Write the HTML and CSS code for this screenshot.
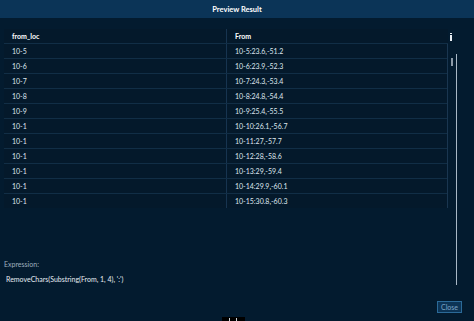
FILE: index.html
```html
<!DOCTYPE html>
<html>
<head>
<meta charset="utf-8">
<link rel="stylesheet" href="styles.css">
</head>
<body>
<div class="dialog">
  <div class="titlebar">Preview Result</div>
  <div class="content">
    <div class="grid">
      <div class="row head">
        <div class="cell">from_loc</div>
        <div class="cell">From</div>
      </div>
      <div class="body">
        <div class="row"><div class="cell">10-5</div><div class="cell">10-5:23.6,-51.2</div></div>
        <div class="row"><div class="cell">10-6</div><div class="cell">10-6:23.9,-52.3</div></div>
        <div class="row"><div class="cell">10-7</div><div class="cell">10-7:24.3,-53.4</div></div>
        <div class="row"><div class="cell">10-8</div><div class="cell">10-8:24.8,-54.4</div></div>
        <div class="row"><div class="cell">10-9</div><div class="cell">10-9:25.4,-55.5</div></div>
        <div class="row"><div class="cell">10-1</div><div class="cell">10-10:26.1,-56.7</div></div>
        <div class="row"><div class="cell">10-1</div><div class="cell">10-11:27,-57.7</div></div>
        <div class="row"><div class="cell">10-1</div><div class="cell">10-12:28,-58.6</div></div>
        <div class="row"><div class="cell">10-1</div><div class="cell">10-13:29,-59.4</div></div>
        <div class="row"><div class="cell">10-1</div><div class="cell">10-14:29.9,-60.1</div></div>
        <div class="row last"><div class="cell">10-1</div><div class="cell">10-15:30.8,-60.3</div></div>
      </div>
    </div>
    <div class="colmenu"></div>
    <div class="thumb"></div>
    <div class="track"></div>
    <div class="expr">
      <div class="expr-label">Expression:</div>
      <div class="expr-text">RemoveChars(Substring(From, 1, 4), ':')</div>
    </div>
    <div class="footer">
      <button class="close">Close</button>
    </div>
  </div>
  <div class="tip"><span></span><span></span></div>
</div>
</body>
</html>
```
FILE: styles.css
```css
html, body {
  margin: 0;
  padding: 0;
  background: #031b2f;
}
body {
  width: 474px;
  height: 321px;
  overflow: hidden;
  font-family: Lato, "Open Sans", sans-serif;
  color: #dfe6ee;
}
.dialog {
  position: relative;
  width: 474px;
  height: 321px;
  display: flex;
  flex-direction: column;
}
.titlebar {
  height: 18px;
  background: #0b3457;
  color: #ffffff;
  font-weight: 700;
  font-size: 7.5px;
  display: flex;
  align-items: center;
  justify-content: center;
  flex: none;
}
.content {
  position: relative;
  flex: 1;
  display: flex;
  flex-direction: column;
  padding: 11px 0 0 4px;
}
.grid {
  width: 444px;
  background: #04192b;
}
.row {
  display: grid;
  grid-template-columns: 222px 1fr;
  height: 14px;
  border-bottom: 1px solid #112e46;
  font-size: 7px;
}
.body .row.last {
  border-bottom: none;
}
.body {
  border-right: 1px solid #1a3650;
}
.cell {
  display: flex;
  align-items: center;
  padding-left: 8px;
  color: #dfe6ee;
}
.row .cell + .cell {
  border-left: 1px solid #173450;
}
.head .cell {
  font-weight: 700;
  color: #ffffff;
}
.colmenu {
  position: absolute;
  left: 450px;
  top: 15px;
  width: 2px;
  height: 7px;
  background: #e8eef4;
  border-top: 1px solid #e8eef4;
  box-shadow: inset 0 3px 0 -2px #031b2f;
}
.thumb {
  position: absolute;
  left: 451px;
  top: 40px;
  width: 2px;
  height: 8px;
  background: #8c9aa8;
}
.track {
  position: absolute;
  left: 456px;
  top: 36px;
  width: 1px;
  height: 231px;
  background: #a9b8c6;
}
.expr {
  margin-top: 51px;
}
.expr-label {
  font-size: 7px;
  color: #9fb0bf;
  height: 11px;
  line-height: 11px;
}
.expr-text {
  font-size: 7px;
  color: #e6ecf2;
  margin-top: 4px;
  padding-left: 2px;
  height: 11px;
  line-height: 11px;
}
.footer {
  display: flex;
  justify-content: flex-end;
  padding-right: 12px;
  margin-top: 16px;
}
.close {
  width: 25px;
  height: 12px;
  padding: 0;
  margin: 0;
  background: #0c3456;
  border: 1px solid #2b6a98;
  color: #7fa6c6;
  font-family: Lato, "Open Sans", sans-serif;
  font-size: 7px;
  line-height: 10px;
}
.tip {
  position: absolute;
  left: 222px;
  bottom: 0;
  width: 23px;
  height: 4px;
  background: #000000;
  display: flex;
  gap: 6px;
  padding-left: 7px;
  box-sizing: border-box;
}
.tip span {
  width: 1px;
  height: 3px;
  margin-top: 1px;
  background: #cfd6dc;
}
```
